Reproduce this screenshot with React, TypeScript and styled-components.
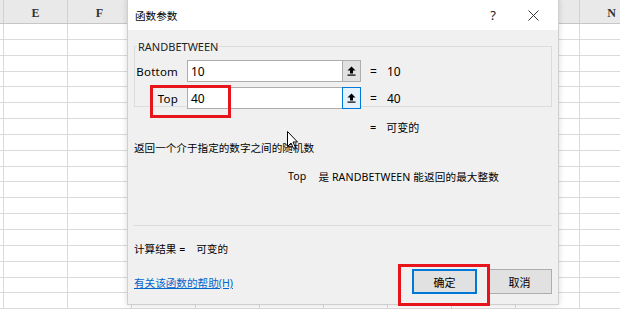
import React from "react"
import styled, { createGlobalStyle } from "styled-components"

const GlobalStyle = createGlobalStyle`
  html, body {
    margin: 0;
    padding: 0;
    background: #fff;
  }
  body {
    width: 620px;
    height: 309px;
    overflow: hidden;
    font-family: "Noto Sans", "Noto Sans CJK SC", sans-serif;
  }
`

// only the labels that are not under the dialog are shown
const columns = ["", "E", "F", "", "", "", "", "", "", "", "N"]
const rowCount = 18

const Stage = styled.div`
  position: relative;
  width: 620px;
  height: 309px;
  overflow: hidden;
`

const Sheet = styled.div`
  display: flex;
  flex-direction: column;
`

const HeaderRow = styled.div`
  display: flex;
  height: 24px;
  background: #e9e9e9;
  border-bottom: 1px solid #c6c6c6;
  box-sizing: border-box;
`

const HeaderCell = styled.div<{ $w: number }>`
  flex: 0 0 ${p => p.$w}px;
  box-sizing: border-box;
  border-right: 1px solid #d0d0d0;
  display: flex;
  align-items: center;
  justify-content: center;
  font-family: "Liberation Serif", serif;
  font-weight: bold;
  font-size: 12px;
  color: #333;
  padding-top: 4px;
`

const Row = styled.div`
  display: flex;
  height: 15.85px;
  box-sizing: border-box;
  border-bottom: 1px solid #dadada;
`

const Cell = styled.div<{ $w: number }>`
  flex: 0 0 ${p => p.$w}px;
  box-sizing: border-box;
  border-right: 1px solid #dadada;
`

const Dialog = styled.div`
  position: absolute;
  left: 127px;
  top: -1px;
  width: 432px;
  height: 306px;
  box-sizing: border-box;
  border: 1px solid #cfcfcf;
  background: #f0f0f0;
  box-shadow: 0 0 6px rgba(0, 0, 0, 0.15);
  display: flex;
  flex-direction: column;
  font-size: 11px;
  color: #000;
`

const TitleBar = styled.div`
  height: 30px;
  flex: 0 0 30px;
  background: #fff;
  display: flex;
  align-items: center;
  padding-left: 7px;
`

const Title = styled.div`
  flex: 1;
  font-size: 10.6px;
  margin-top: 1px;
`

const TitleButton = styled.div<{ $w: number }>`
  width: ${p => p.$w}px;
  display: flex;
  align-items: center;
  justify-content: center;
  font-size: 13px;
  color: #222;
`

const Body = styled.div`
  position: relative;
  flex: 1;
  padding: 0 6px;
  display: flex;
  flex-direction: column;
`

const Group = styled.fieldset`
  margin: 9px 0 0;
  padding: 6px 0 0 0;
  height: 68px;
  box-sizing: border-box;
  border: 1px solid #dcdcdc;
  display: flex;
  flex-direction: column;
  gap: 5px;
`

const Legend = styled.legend`
  padding: 0 1px;
  margin-left: 2px;
  font-size: 11px;
  color: #222;
`

const ArgRow = styled.div`
  display: flex;
  align-items: center;
  height: 22px;
`

const ArgLabel = styled.div`
  width: 43px;
  text-align: right;
  padding-right: 9px;
  font-size: 11.5px;
  letter-spacing: 0.2px;
`

const InputBox = styled.div`
  width: 156px;
  height: 22px;
  box-sizing: border-box;
  background: #fff;
  border: 1px solid #adadad;
  display: flex;
  align-items: center;
  padding-left: 3px;
  font-size: 12px;
`

const PickButton = styled.div<{ $active?: boolean }>`
  width: 19px;
  height: 22px;
  box-sizing: border-box;
  margin-left: -1px;
  border: 1px solid ${p => (p.$active ? "#0078d7" : "#adadad")};
  background: ${p => (p.$active ? "#e5f1fb" : "#e1e1e1")};
  display: flex;
  align-items: center;
  justify-content: center;
`

const Value = styled.div`
  margin-left: 9px;
  font-size: 12px;
  display: flex;
  gap: 10px;
`

const ResultLine = styled.div`
  margin-top: 12px;
  padding-left: 236px;
  font-size: 11px;
  display: flex;
  gap: 10px;
`

const Description = styled.div`
  margin-top: 5px;
  font-size: 10.6px;
`

const ParamDescription = styled.div`
  margin-top: 14px;
  padding-left: 154px;
  font-size: 10.6px;
  display: flex;
  gap: 12px;
  letter-spacing: 0.1px;
`

const Divider = styled.div`
  margin-top: 41px;
  height: 1px;
  background: #dadada;
`

const Result = styled.div`
  margin-top: 15px;
  font-size: 10.6px;
  display: flex;
  gap: 11px;
`

const Footer = styled.div`
  margin-top: 13px;
  display: flex;
  align-items: center;
`

const HelpLink = styled.a`
  flex: 1;
  color: #0066cc;
  text-decoration: underline;
  font-size: 10.6px;
  margin-top: 2px;
`

const Button = styled.div<{ $primary?: boolean }>`
  width: 65px;
  height: 25px;
  box-sizing: border-box;
  margin-left: 10px;
  border: ${p => (p.$primary ? "2px solid #0078d7" : "1px solid #adadad")};
  background: #e1e1e1;
  display: flex;
  align-items: center;
  justify-content: center;
  font-size: 11px;
`

const Highlight = styled.div<{ $x: number; $y: number; $w: number; $h: number }>`
  position: absolute;
  left: ${p => p.$x}px;
  top: ${p => p.$y}px;
  width: ${p => p.$w}px;
  height: ${p => p.$h}px;
  box-sizing: border-box;
  border: 3px solid #e8141b;
  pointer-events: none;
`

const Cursor = styled.svg`
  position: absolute;
  left: 287px;
  top: 131px;
`

const UpArrow = () => (
  <svg width="9" height="10" viewBox="0 0 9 10">
    <path d="M4.5 0.5 L8.5 4.5 H6 V7.5 H3 V4.5 H0.5 Z" fill="#000" />
    <rect x="0.5" y="8.5" width="8" height="1.2" fill="#000" />
  </svg>
)

const CloseIcon = () => (
  <svg width="11" height="11" viewBox="0 0 11 11">
    <path d="M0.5 0.5 L10.5 10.5 M10.5 0.5 L0.5 10.5" stroke="#333" strokeWidth="1" />
  </svg>
)

const widthOf = (i: number) => (i === 0 ? 4 : 64)

export default function App() {
  return (
    <Stage>
      <GlobalStyle />
      <Sheet>
        <HeaderRow>
          {columns.map((c, i) => (
            <HeaderCell key={i} $w={widthOf(i)}>
              {c}
            </HeaderCell>
          ))}
        </HeaderRow>
        {Array.from({ length: rowCount }).map((_, r) => (
          <Row key={r}>
            {columns.map((c, i) => (
              <Cell key={i} $w={widthOf(i)} />
            ))}
          </Row>
        ))}
      </Sheet>

      <Dialog>
        <TitleBar>
          <Title>函数参数</Title>
          <TitleButton $w={30}>?</TitleButton>
          <TitleButton $w={50}>
            <CloseIcon />
          </TitleButton>
        </TitleBar>
        <Body>
          <Group>
            <Legend>RANDBETWEEN</Legend>
            <ArgRow>
              <ArgLabel>Bottom</ArgLabel>
              <InputBox>10</InputBox>
              <PickButton>
                <UpArrow />
              </PickButton>
              <Value>
                <span>=</span>
                <span>10</span>
              </Value>
            </ArgRow>
            <ArgRow>
              <ArgLabel>Top</ArgLabel>
              <InputBox>40</InputBox>
              <PickButton $active>
                <UpArrow />
              </PickButton>
              <Value>
                <span>=</span>
                <span>40</span>
              </Value>
            </ArgRow>
          </Group>
          <ResultLine>
            <span>=</span>
            <span>可变的</span>
          </ResultLine>
          <Description>返回一个介于指定的数字之间的随机数</Description>
          <ParamDescription>
            <span>Top</span>
            <span>是 RANDBETWEEN 能返回的最大整数</span>
          </ParamDescription>
          <Divider />
          <Result>
            <span>计算结果 =</span>
            <span>可变的</span>
          </Result>
          <Footer>
            <HelpLink>有关该函数的帮助(H)</HelpLink>
            <Button $primary>确定</Button>
            <Button>取消</Button>
          </Footer>
        </Body>
      </Dialog>

      <Highlight $x={150} $y={85} $w={81} $h={33} />
      <Highlight $x={398} $y={264} $w={92} $h={42} />

      <Cursor width="12" height="19" viewBox="0 0 12 19">
        <path
          d="M0.5 0.5 V15.5 L4 12 L6.5 17.5 L8.5 16.5 L6 11 H10.5 Z"
          fill="#fff"
          stroke="#000"
          strokeWidth="1"
        />
      </Cursor>
    </Stage>
  )
}
